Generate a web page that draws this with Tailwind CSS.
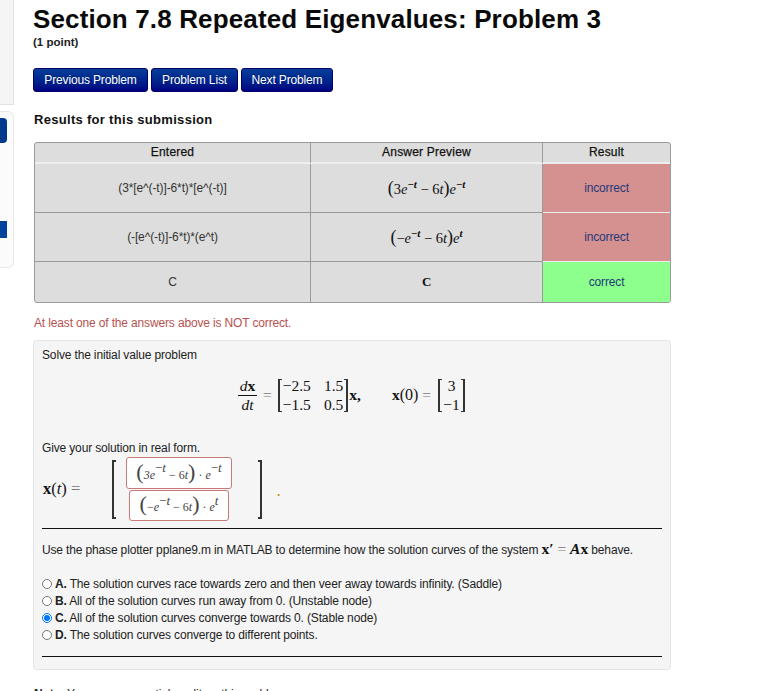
<!DOCTYPE html>
<html lang="en"><head><meta charset="utf-8"><title>Section 7.8 Repeated Eigenvalues: Problem 3</title>
<script src="https://cdn.jsdelivr.net/npm/@tailwindcss/browser@4"></script></head>
<body class="bg-white">
<div class="flex h-[691px] w-[757px] overflow-hidden bg-white font-['Liberation_Sans',Arial,sans-serif] text-[12px] leading-[18px] tracking-[-0.15px] text-[#222]">
  <aside class="flex w-[14px] shrink-0 flex-col gap-[6px]">
    <div class="h-[105px] border-r border-b border-[#e3e3e3] bg-[#f5f5f5]"></div>
    <div class="flex h-[157px] flex-col rounded-tr-[6px] rounded-br-[6px] border-t border-r border-b border-[#e8e8e8] bg-[#fbfbfb] pt-[6px]">
      <div class="h-[25px] w-[7px] rounded-r-[4px] bg-[#003a8c]"></div>
      <div class="mt-[78px] h-[17px] w-[7px] bg-[#00439c]"></div>
    </div>
  </aside>
  <main class="ml-[19px] w-[638px] shrink-0">
    <h1 class="mt-[4px] h-[30px] text-[26px] leading-[30px] font-bold tracking-[0.14px] text-[#0a0a0a]">Section 7.8 Repeated Eigenvalues: Problem 3</h1>
    <p class="mt-[0px] h-[16px] text-[11.5px] leading-[16px] font-bold tracking-normal">(1 point)</p>
    <nav class="mt-[18px] flex gap-[3px]">
      <a class="flex h-[24px] w-[115px] items-center justify-center rounded-[3px] border border-[#000066] bg-gradient-to-b from-[#0a3d9a] to-[#000080] text-white [text-shadow:0_-1px_0_rgba(0,0,0,.25)]">Previous Problem</a>
      <a class="flex h-[24px] w-[87px] items-center justify-center rounded-[3px] border border-[#000066] bg-gradient-to-b from-[#0a3d9a] to-[#000080] text-white [text-shadow:0_-1px_0_rgba(0,0,0,.25)]">Problem List</a>
      <a class="flex h-[24px] w-[92px] items-center justify-center rounded-[3px] border border-[#000066] bg-gradient-to-b from-[#0a3d9a] to-[#000080] text-white [text-shadow:0_-1px_0_rgba(0,0,0,.25)]">Next Problem</a>
    </nav>
    <h2 class="mt-[19px] ml-px h-[18px] text-[13px] leading-[18px] font-bold tracking-[0.3px] text-[#111]">Results for this submission</h2>
    <div class="mt-[13px] ml-px grid h-[161px] w-[637px] grid-cols-[276px_232px_1fr] grid-rows-[21px_49px_49px_1fr] overflow-hidden rounded-[3px] border border-[#9a9a9a] bg-[#ddd] text-center text-[#333]">
      <div class="flex items-center justify-center border-r border-b-2 border-r-[#999] border-b-[#eee] pb-[2px] tracking-[0.2px] text-[#111] [-webkit-text-stroke:0.25px_#111]">Entered</div>
      <div class="flex items-center justify-center border-r border-b-2 border-r-[#999] border-b-[#eee] pb-[2px] tracking-[0.2px] text-[#111] [-webkit-text-stroke:0.25px_#111]">Answer Preview</div>
      <div class="flex items-center justify-center border-b-2 border-b-[#eee] pb-[2px] tracking-[0.2px] text-[#111] [-webkit-text-stroke:0.25px_#111]">Result</div>

      <div class="flex items-center justify-center border-r border-b border-[#999] tracking-[-0.12px]">(3*[e^(-t)]-6*t)*[e^(-t)]</div>
      <div class="flex items-center justify-center border-r border-b border-[#999] font-['Liberation_Serif',serif] text-[14.5px] tracking-normal text-[#111]"><span><span class="text-[18px]">(</span>3<i>e</i><sup class="text-[11px] font-bold">−<i>t</i></sup> − 6<i>t</i><span class="text-[18px]">)</span><i>e</i><sup class="text-[11px] font-bold">−<i>t</i></sup></span></div>
      <div class="flex items-center justify-center border-b border-b-[#eee] bg-[#d59090] text-[#1f3a7a]">incorrect</div>

      <div class="flex items-center justify-center border-r border-b border-[#999] tracking-[-0.12px]">(-[e^(-t)]-6*t)*(e^t)</div>
      <div class="flex items-center justify-center border-r border-b border-[#999] font-['Liberation_Serif',serif] text-[14.5px] tracking-normal text-[#111]"><span><span class="text-[18px]">(</span>−<i>e</i><sup class="text-[11px] font-bold">−<i>t</i></sup> − 6<i>t</i><span class="text-[18px]">)</span><i>e</i><sup class="text-[11px] font-bold"><i>t</i></sup></span></div>
      <div class="flex items-center justify-center border-b border-b-[#eee] bg-[#d59090] text-[#1f3a7a]">incorrect</div>

      <div class="flex items-center justify-center border-r border-[#999]">C</div>
      <div class="flex items-center justify-center border-r border-[#999] font-['Liberation_Serif',serif] text-[13px] font-bold text-[#111]">C</div>
      <div class="flex items-center justify-center bg-[#8cff8c] text-[#1f3a7a]">correct</div>
    </div>
    <p class="mt-[11px] ml-px h-[18px] text-[#b7514f]">At least one of the answers above is NOT correct.</p>
    <section class="mt-[8px] h-[330px] rounded-[4px] border border-[#e3e3e3] bg-[#f5f5f5] px-[8px] pt-[5px]">
      <p class="h-[18px]">Solve the initial value problem</p>
      <div class="mt-[9px] flex h-[44px] items-center pl-[196px] font-['Liberation_Serif',serif] text-[15.5px] leading-[16px] tracking-normal text-[#111]">
        <div class="flex w-[19px] flex-col items-center"><span class="w-full border-b border-[#111] pb-[1px] text-center"><i>d</i><b>x</b></span><span class="pt-[1px]"><i>dt</i></span></div>
        <span class="mx-[6px] text-[#777]">=</span>
        <span class="h-[33px] w-[4px] border-y border-l-2 border-[#333]"></span>
        <div class="mx-[1px] grid grid-cols-[auto_auto] gap-x-[13px] text-right leading-[19px]"><span>−2.5</span><span>1.5</span><span>−1.5</span><span>0.5</span></div>
        <span class="h-[33px] w-[4px] border-y border-r-2 border-[#333]"></span>
        <span class="ml-[1px] font-bold">x,</span>
        <span class="ml-[31px] font-bold">x</span><span class="text-[16px]">(0)</span>
        <span class="mx-[4px] text-[#777]">=</span>
        <span class="ml-[3px] h-[33px] w-[4px] border-y border-l-2 border-[#333]"></span>
        <div class="grid w-[19px] text-center leading-[19px]"><span>3</span><span>−1</span></div>
        <span class="h-[33px] w-[4px] border-y border-r-2 border-[#333]"></span>
      </div>
      <p class="mt-[22px] h-[18px]">Give your solution in real form.</p>
      <div class="flex h-[64px] items-center font-['Liberation_Serif',serif] text-[16.5px] tracking-normal">
        <span class="w-[70px] pl-px text-[#111]"><b>x</b>(<i>t</i>) <span class="text-[#777]">=</span></span>
        <span class="h-[59px] w-[4px] border-y-2 border-l-2 border-[#333]"></span>
        <div class="ml-[10px] flex w-[106px] flex-col items-center gap-[1px]">
          <div class="flex h-[32px] w-[106px] items-center justify-center rounded-[3px] border-[1.5px] border-[#c97a78] bg-white text-[12px] text-[#444]"><span><span class="text-[22px] font-light">(</span><i>3e</i><sup class="text-[13px]">−<i>t</i></sup> − 6<i>t</i><span class="text-[22px] font-light">)</span> · <i>e</i><sup class="text-[13px]">−<i>t</i></sup></span></div>
          <div class="flex h-[31px] w-[100px] items-center justify-center rounded-[3px] border-[1.5px] border-[#c97a78] bg-white text-[12px] text-[#444]"><span><span class="text-[22px] font-light">(</span>−<i>e</i><sup class="text-[13px]">−<i>t</i></sup> − 6<i>t</i><span class="text-[22px] font-light">)</span> · <i>e</i><sup class="text-[13px]"><i>t</i></sup></span></div>
        </div>
        <span class="ml-[26px] h-[59px] w-[4px] border-y-2 border-r-2 border-[#333]"></span>
        <span class="mt-[6px] ml-[15px] font-['Liberation_Sans',sans-serif] text-[12px] font-bold text-[#d9900f]">.</span>
      </div>
      <hr class="mt-[7px] border-t border-[#111]">
      <p class="mt-[11px] h-[18px]">Use the phase plotter pplane9.m in MATLAB to determine how the solution curves of the system <span class="font-['Liberation_Serif',serif] text-[15.5px] tracking-normal text-[#111]"><b>x′</b> <span class="text-[#777]">=</span> <b><i>A</i>x</b></span> behave.</p>
      <div class="mt-[17px] flex flex-col">
        <label class="flex h-[17px] items-center gap-[3px]"><input type="radio" name="c" class="m-0 size-[10px]"><span><b>A.</b> The solution curves race towards zero and then veer away towards infinity. (Saddle)</span></label>
        <label class="flex h-[17px] items-center gap-[3px]"><input type="radio" name="c" class="m-0 size-[10px]"><span><b>B.</b> All of the solution curves run away from 0. (Unstable node)</span></label>
        <label class="flex h-[17px] items-center gap-[3px]"><input type="radio" name="c" checked class="m-0 size-[10px]"><span><b>C.</b> All of the solution curves converge towards 0. (Stable node)</span></label>
        <label class="flex h-[17px] items-center gap-[3px]"><input type="radio" name="c" class="m-0 size-[10px]"><span><b>D.</b> The solution curves converge to different points.</span></label>
      </div>
      <hr class="mt-[13px] border-t border-[#111]">
    </section>
    <p class="mt-[15px] ml-px"><b>Note:</b> You can earn partial credit on this problem.</p>
  </main>
</div>
</body></html>
